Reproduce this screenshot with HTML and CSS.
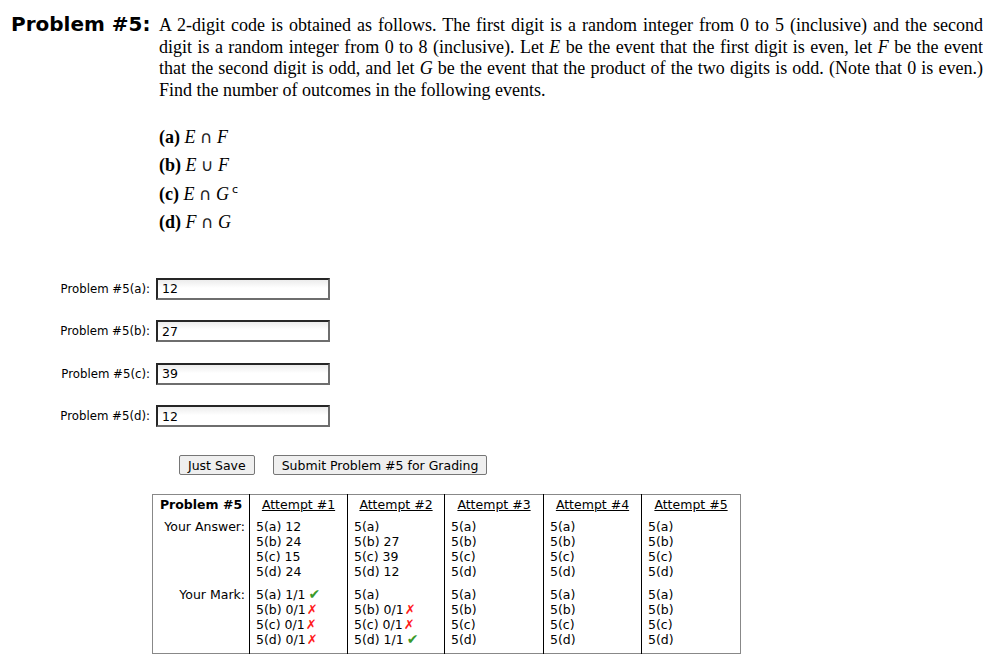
FILE: index.html
```html
<!DOCTYPE html>
<html>
<head>
<meta charset="utf-8">
<link rel="stylesheet" href="styles.css">
</head>
<body>
<div class="problem">
  <div class="ptitle">Problem #5:</div>
  <div class="pbody">
    <p class="ptext">A 2-digit code is obtained as follows. The first digit is a random integer from 0 to 5 (inclusive) and the second digit is a random integer from 0 to 8 (inclusive). Let <i>E</i> be the event that the first digit is even, let <i>F</i> be the event that the second digit is odd, and let <i>G</i> be the event that the product of the two digits is odd. (Note that 0 is even.) Find the number of outcomes in the following events.</p>
    <div class="parts">
      <div class="part"><b>(a)</b> <i>E</i> <span class="op">∩</span> <i>F</i></div>
      <div class="part"><b>(b)</b> <i>E</i> <span class="op">∪</span> <i>F</i></div>
      <div class="part"><b>(c)</b> <i>E</i> <span class="op">∩</span> <i>G</i><sup class="comp">c</sup></div>
      <div class="part"><b>(d)</b> <i>F</i> <span class="op">∩</span> <i>G</i></div>
    </div>
  </div>
</div>

<div class="answers">
  <div class="arow"><span class="alabel">Problem #5(a):</span><input class="ainput" type="text" value="12"></div>
  <div class="arow"><span class="alabel">Problem #5(b):</span><input class="ainput" type="text" value="27"></div>
  <div class="arow"><span class="alabel">Problem #5(c):</span><input class="ainput" type="text" value="39"></div>
  <div class="arow"><span class="alabel">Problem #5(d):</span><input class="ainput" type="text" value="12"></div>
</div>

<div class="buttons">
  <button class="btn">Just Save</button>
  <button class="btn">Submit Problem #5 for Grading</button>
</div>

<table class="attempts">
  <colgroup>
    <col class="c0"><col class="c1"><col class="c2"><col class="c3"><col class="c4"><col class="c5">
  </colgroup>
  <thead>
    <tr>
      <th class="hfirst">Problem #5</th>
      <th><a class="alink">Attempt #1</a></th>
      <th><a class="alink">Attempt #2</a></th>
      <th><a class="alink">Attempt #3</a></th>
      <th><a class="alink">Attempt #4</a></th>
      <th><a class="alink">Attempt #5</a></th>
    </tr>
  </thead>
  <tbody>
    <tr class="ansrow">
      <td class="rlabel">Your Answer:</td>
      <td>5(a) 12<br>5(b) 24<br>5(c) 15<br>5(d) 24</td>
      <td>5(a)<br>5(b) 27<br>5(c) 39<br>5(d) 12</td>
      <td>5(a)<br>5(b)<br>5(c)<br>5(d)</td>
      <td>5(a)<br>5(b)<br>5(c)<br>5(d)</td>
      <td>5(a)<br>5(b)<br>5(c)<br>5(d)</td>
    </tr>
    <tr class="markrow">
      <td class="rlabel">Your Mark:</td>
      <td>5(a) 1/1<span class="ok">✔</span><br>5(b) 0/1<span class="bad">✗</span><br>5(c) 0/1<span class="bad">✗</span><br>5(d) 0/1<span class="bad">✗</span></td>
      <td>5(a)<br>5(b) 0/1<span class="bad">✗</span><br>5(c) 0/1<span class="bad">✗</span><br>5(d) 1/1<span class="ok">✔</span></td>
      <td>5(a)<br>5(b)<br>5(c)<br>5(d)</td>
      <td>5(a)<br>5(b)<br>5(c)<br>5(d)</td>
      <td>5(a)<br>5(b)<br>5(c)<br>5(d)</td>
    </tr>
  </tbody>
</table>
</body>
</html>
```

FILE: styles.css
```css
body {
  margin: 8px;
  background: #fff;
  color: #000;
  font-family: "DejaVu Sans", Verdana, sans-serif;
}

.problem {
  display: flex;
  align-items: baseline;
  padding-top: 4px;
}

.ptitle {
  width: 151px;
  flex: none;
  font-family: "DejaVu Sans", Verdana, sans-serif;
  font-weight: bold;
  font-size: 20px;
  padding-left: 3px;
  box-sizing: border-box;
  white-space: nowrap;
}

.pbody {
  flex: 1;
}

.ptext {
  margin: 0;
  font-family: "Liberation Serif", "Times New Roman", serif;
  font-size: 18px;
  line-height: 21.5px;
  text-align: justify;
}

.parts {
  margin-top: 21.5px;
  font-family: "Liberation Serif", "Times New Roman", serif;
  font-size: 18px;
}

.part {
  height: 28.5px;
  line-height: 28.5px;
  white-space: nowrap;
}

.op {
  font-family: "DejaVu Sans", sans-serif;
  font-size: 17px;
  line-height: 0;
  color: #222;
}

.comp {
  font-family: "DejaVu Sans", sans-serif;
  font-size: 11px;
  vertical-align: 7px;
  line-height: 0;
  margin-left: 3px;
}

.answers {
  margin-top: 41px;
  display: flex;
  flex-direction: column;
  gap: 20.6px;
}

.arow {
  display: flex;
  align-items: center;
}

.alabel {
  width: 148px;
  text-align: right;
  font-size: 11.75px;
  padding-right: 6px;
  box-sizing: border-box;
  flex: none;
}

.ainput {
  width: 174px;
  height: 22px;
  box-sizing: border-box;
  margin: 0;
  padding: 0 4px;
  font-family: "DejaVu Sans", Verdana, sans-serif;
  font-size: 12.5px;
  color: #000;
  border-style: solid;
  border-width: 2px;
  border-color: #262626 #6e6e6e #6e6e6e #262626;
  background: linear-gradient(#ececec, #fff 45%);
  outline: none;
}

.buttons {
  margin-top: 28px;
  padding-left: 171px;
  display: flex;
  gap: 18px;
}

.btn {
  height: 20px;
  margin: 0;
  padding: 0 8px;
  font-family: "DejaVu Sans", Verdana, sans-serif;
  font-size: 12.5px;
  color: #000;
  background: #efefef;
  border: 1px solid #767676;
  border-radius: 2px;
}

.attempts {
  margin-top: 19px;
  margin-left: 144px;
  border-collapse: collapse;
  table-layout: fixed;
  width: 589px;
  border: 1px solid #888;
  font-size: 12.5px;
  line-height: 15px;
}

.c0 { width: 97px; }
.c1 { width: 98px; }
.c2 { width: 97px; }
.c3 { width: 99px; }
.c4 { width: 98px; }
.c5 { width: 99px; }

.attempts th,
.attempts td {
  border-left: 1px solid #000;
  vertical-align: top;
  white-space: nowrap;
}

.attempts th:first-child,
.attempts td:first-child {
  border-left: 1px solid #888;
}

.attempts th {
  font-weight: normal;
  text-align: center;
  padding: 2px 2px 3px;
}

.attempts th.hfirst {
  font-weight: bold;
}

.alink {
  color: #000;
  text-decoration: underline;
}

.attempts td {
  text-align: left;
  padding-left: 6px;
}

.attempts td.rlabel {
  text-align: right;
  padding-left: 0;
  padding-right: 4px;
}

.ansrow td {
  padding-top: 4px;
  padding-bottom: 4px;
}

.markrow td {
  padding-top: 4px;
  padding-bottom: 6px;
}

.ok {
  color: #3a9a2a;
  margin-left: 3px;
  font-size: 14px;
  line-height: 0;
}

.bad {
  color: #ff1a1a;
  margin-left: 1px;
  font-size: 13px;
  line-height: 0;
}
```
